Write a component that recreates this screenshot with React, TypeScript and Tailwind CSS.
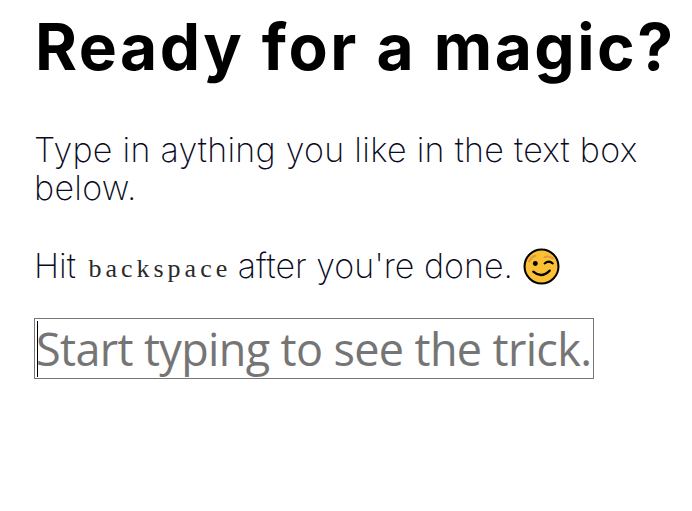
export default function App() {
  return (
    <div className="min-h-[511px] bg-white overflow-hidden pl-[34px] pr-[20px] text-black font-['Inter',sans-serif]">
      <h1 className="text-[64px] leading-[70px] font-bold pt-[12px] pl-[1px] whitespace-nowrap tracking-[2.5px]">
        Ready for a magic?
      </h1>
      <p className="mt-[49px] text-[34px] leading-[38px] font-extralight tracking-[0.28px] text-[#0a0a23] w-[620px]">
        Type in aything you like in the text box below.
      </p>
      <p className="mt-[37px] text-[34px] leading-[38px] font-extralight text-[#0a0a23] flex items-center whitespace-pre">
        Hit <code className="font-['Liberation_Serif',serif] font-normal text-[26px] text-[#2a2a2a] tracking-[4px] pt-[6px] ml-[3px] mr-[-3px]">backspace</code> after you're done.{' '}
        <svg viewBox="0 0 36 36" className="w-[37px] h-[37px]">
          <circle cx="18" cy="18" r="16.5" fill="#fcc034" stroke="#000" strokeWidth="2" />
          <path d="M6 13 Q8 8.5 12 7.5" fill="none" stroke="#e09a3a" strokeWidth="2" strokeLinecap="round" />
          <path d="M21 9 Q25 7 29 10" fill="none" stroke="#e09a3a" strokeWidth="2" strokeLinecap="round" />
          <circle cx="12" cy="15" r="2.4" fill="#000" />
          <path d="M21 15 Q25 11.5 29 15" fill="none" stroke="#000" strokeWidth="2" strokeLinecap="round" />
          <path d="M10 23 Q18 30 26 22" fill="none" stroke="#000" strokeWidth="2.2" strokeLinecap="round" />
        </svg>
      </p>
      <div className="mt-[30px] relative w-[560px] h-[61px] border border-[#767676]">
        <input
          readOnly
          placeholder="Start typing to see the trick."
          className="w-full h-full pl-[1px] text-[45px] tracking-[-0.65px] font-['Open_Sans',sans-serif] placeholder:text-[#757575] outline-none"
        />
        <span className="absolute left-[2px] top-[2px] w-px h-[56px] bg-black" />
      </div>
    </div>
  );
}
